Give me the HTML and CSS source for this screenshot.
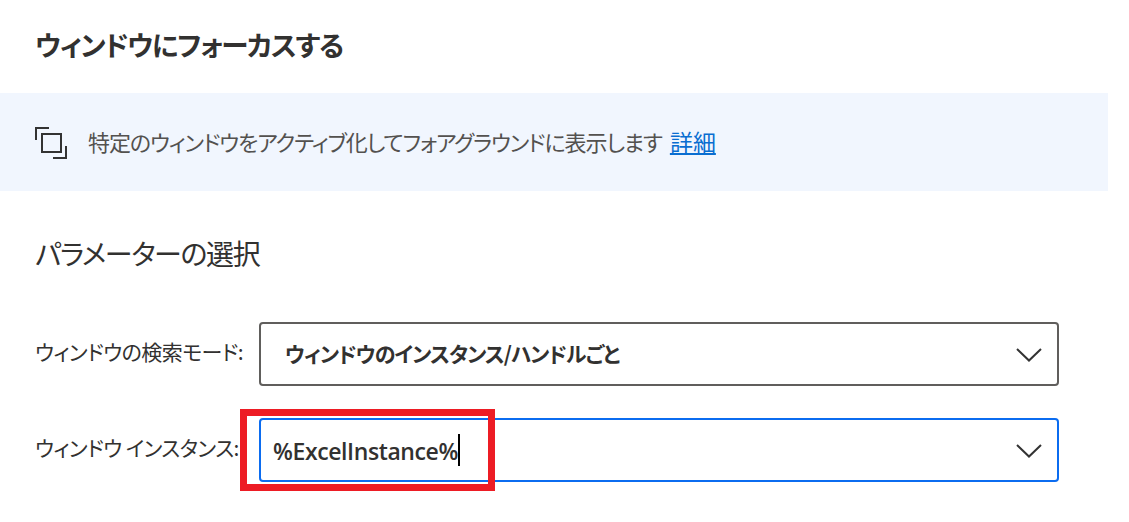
FILE: index.html
```html
<!DOCTYPE html>
<html lang="ja">
<head>
<meta charset="utf-8">
<title>ウィンドウにフォーカスする</title>
<link rel="stylesheet" href="styles.css">
</head>
<body>
<div class="dialog">
  <h1 class="title">ウィンドウにフォーカスする</h1>
  <div class="banner">
    <svg class="banner-icon" viewBox="0 0 32 32" width="32" height="32" fill="none" stroke="#333" stroke-width="2">
      <rect x="7" y="7" width="19" height="18"/>
      <path d="M1 13V1H14"/>
      <path d="M18 31H31V19"/>
    </svg>
    <p class="banner-text"><span class="banner-copy">特定のウィンドウをアクティブ化してフォアグラウンドに表示します</span><a class="more" href="#">詳細</a></p>
  </div>
  <h2 class="section">パラメーターの選択</h2>
  <div class="row first">
    <label class="label">ウィンドウの検索モード:</label>
    <div class="field select">
      <span class="value bold">ウィンドウのインスタンス/ハンドルごと</span>
      <svg class="chevron" viewBox="0 0 26 14" width="26" height="14" fill="none" stroke="#333" stroke-width="2"><path d="M1 1L13 12.500L25 1"/></svg>
    </div>
  </div>
  <div class="row second">
    <label class="label">ウィンドウ インスタンス:</label>
    <div class="field focused">
      <span class="value typed">%ExcelInstance%</span><span class="caret"></span>
      <svg class="chevron" viewBox="0 0 26 14" width="26" height="14" fill="none" stroke="#333" stroke-width="2"><path d="M1 1L13 12.500L25 1"/></svg>
      <div class="highlight"></div>
    </div>
  </div>
</div>
</body>
</html>
```

FILE: styles.css
```css
* { box-sizing: border-box; }
html, body { margin: 0; padding: 0; background: #fff; }
body {
  width: 1129px;
  height: 522px;
  overflow: hidden;
  color: #323130;
  font-family: "Noto Sans CJK JP", "Noto Sans", sans-serif;
  font-feature-settings: "palt";
}
.dialog { display: flex; flex-direction: column; width: 1108px; }
.title {
  margin: 0;
  height: 93px;
  padding: 22px 0 0 35px;
  font-size: 27.500px;
  line-height: 44px;
  font-weight: 600;
  letter-spacing: -1.350px;
}
.banner {
  display: flex;
  align-items: center;
  height: 98px;
  padding-left: 35px;
  background: #f1f6fe;
}
.banner-icon { flex: none; margin-top: 2px; }
.banner-text {
  margin: -2px 0 0 21px;
  font-size: 22px;
  line-height: 32px;
  font-weight: 400;
  color: #53514f;
}
.banner-copy { letter-spacing: -1.100px; }
.more { margin-left: 8px; font-size: 23px; color: #0a6ed1; text-decoration: underline; }
.section {
  margin: 0;
  padding: 40px 0 0 35px;
  height: 131px;
  font-size: 28px;
  line-height: 44px;
  font-weight: 400;
  letter-spacing: -1.400px;
}
.row { display: flex; align-items: center; padding-left: 35px; height: 64px; }
.second { margin-top: 32px; }
.label {
  flex: none;
  width: 224px;
  margin-top: -6px;
  font-size: 21px;
  line-height: 30px;
  font-weight: 400;
  white-space: nowrap;
  letter-spacing: -0.550px;
}
.field {
  position: relative;
  display: flex;
  align-items: center;
  width: 800px;
  height: 64px;
  border: 2px solid #605e5c;
  border-radius: 4px;
  background: #fff;
}
.select { padding-left: 24px; }
.focused { padding-left: 12px; border-color: #0b6cf0; }
.value { font-size: 22px; line-height: 32px; white-space: nowrap; }
.bold { margin-top: -2px; font-weight: 600; font-size: 21px; letter-spacing: -0.950px; }
.typed { font-family: "Open Sans", sans-serif; font-weight: 600; font-size: 23px; letter-spacing: -0.400px; margin-top: 2px; }
.caret { width: 2px; height: 32px; background: #000; }
.chevron { position: absolute; right: 15px; top: 24px; }
.highlight {
  position: absolute;
  left: -21px;
  top: -11px;
  width: 255px;
  height: 82px;
  border: 7px solid #ed1c24;
  pointer-events: none;
}
```
